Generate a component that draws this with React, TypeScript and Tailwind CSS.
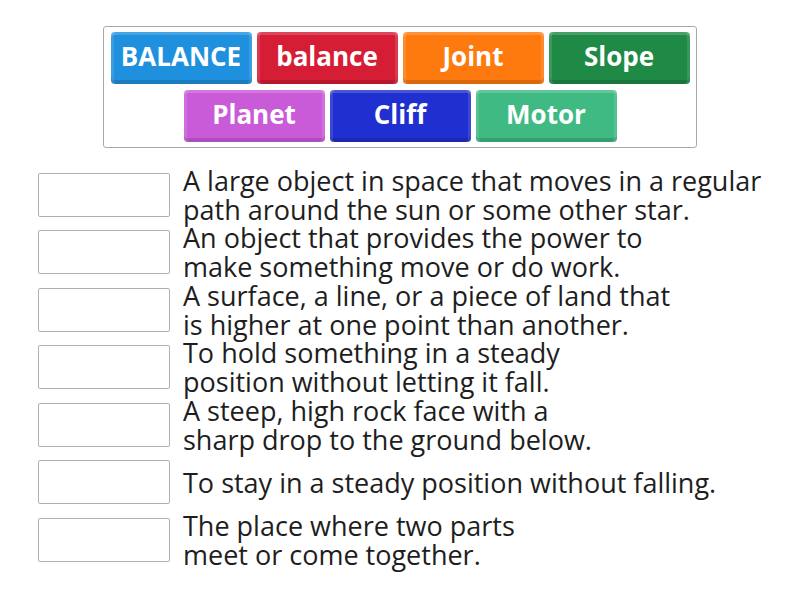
const tiles = [
  { label: 'BALANCE', bg: 'bg-[#1f90dd]' },
  { label: 'balance', bg: 'bg-[#d51d36]' },
  { label: 'Joint', bg: 'bg-[#ff7a0e]' },
  { label: 'Slope', bg: 'bg-[#1f8a46]' },
  { label: 'Planet', bg: 'bg-[#c95bd8]' },
  { label: 'Cliff', bg: 'bg-[#1f2fd0]' },
  { label: 'Motor', bg: 'bg-[#3fba83]' },
]

const definitions: string[][] = [
  ['A large object in space that moves in a regular', 'path around the sun or some other star.'],
  ['An object that provides the power to', 'make something move or do work.'],
  ['A surface, a line, or a piece of land that', 'is higher at one point than another.'],
  ['To hold something in a steady', 'position without letting it fall.'],
  ['A steep, high rock face with a', 'sharp drop to the ground below.'],
  ['To stay in a steady position without falling.'],
  ['The place where two parts', 'meet or come together.'],
]

const Tile = ({ label, bg }: { label: string; bg: string }) => (
  <div
    className={`${bg} flex h-[52px] w-[141px] items-center justify-center rounded-[4px] pb-[3px] text-[26px] font-bold text-white shadow-[inset_0_3px_0_rgba(255,255,255,0.18),inset_3px_0_0_rgba(255,255,255,0.12),inset_-3px_0_0_rgba(255,255,255,0.12),inset_0_-4px_0_rgba(0,0,0,0.14)]`}
  >
    {label}
  </div>
)

export default function App() {
  return (
    <div className="min-h-[600px] w-[800px] bg-white pt-[26px] font-['Open_Sans',sans-serif]">
      <div className="mx-auto flex w-[594px] flex-wrap justify-center gap-x-[5px] gap-y-[6px] rounded-[3px] border border-[#a8a8a8] px-[6px] py-[5px]">
        {tiles.map((t) => (
          <Tile key={t.label} {...t} />
        ))}
      </div>

      <div className="mt-[18px] pl-[38px]">
        {definitions.map((lines, i) => (
          <div key={i} className="flex h-[57.5px] items-center">
            <div className="h-[44px] w-[132px] shrink-0 rounded-[2px] border border-[#b0b0b0] bg-white" />
            <p className="ml-[13px] whitespace-nowrap text-[27px] leading-[29px] text-[#1e1e1e]">
              {lines.map((l, j) => (
                <span key={j}>
                  {j > 0 && <br />}
                  {l}
                </span>
              ))}
            </p>
          </div>
        ))}
      </div>
    </div>
  )
}
